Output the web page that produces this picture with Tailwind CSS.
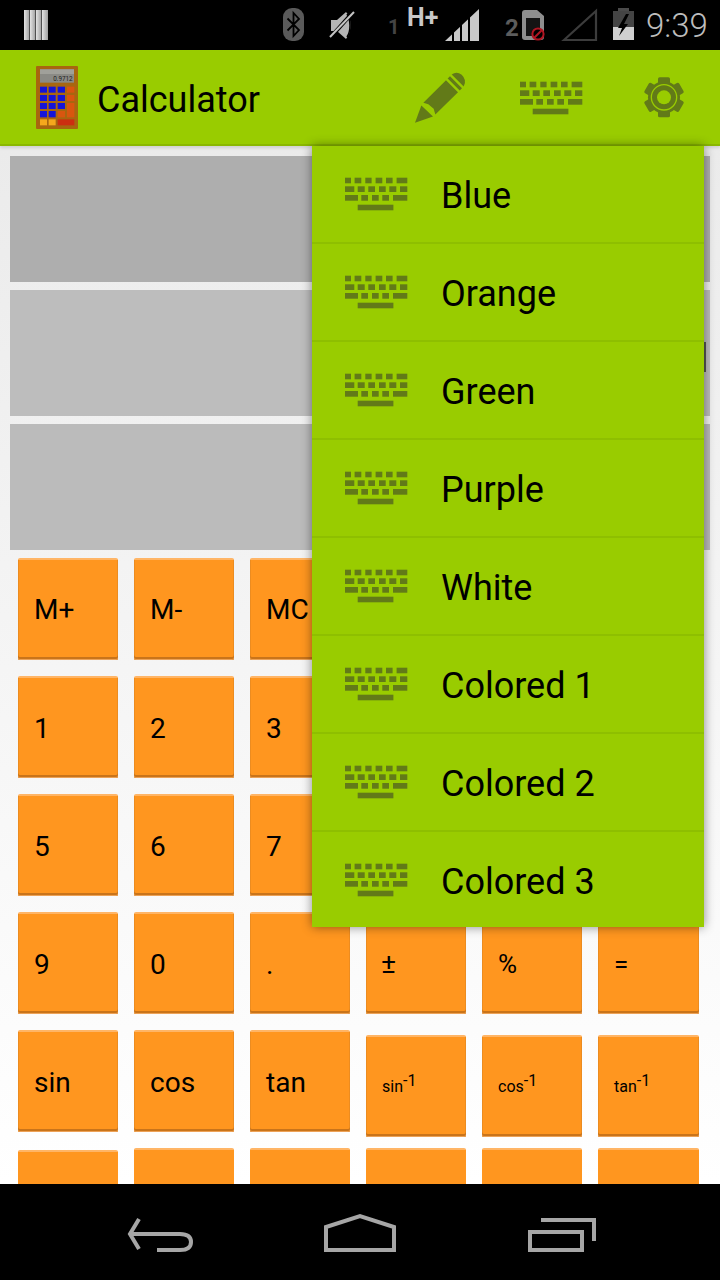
<!DOCTYPE html>
<html>
<head>
<meta charset="utf-8">
<script src="https://cdn.jsdelivr.net/npm/@tailwindcss/browser@4"></script>
<title>Calculator</title>
</head>
<body class="bg-black font-['Roboto',sans-serif]">
<svg class="hidden">
  <defs>
    <symbol id="kb" viewBox="0 0 63 34">
      <g fill="currentColor">
        <rect x="0" y="0.7" width="6" height="5.6"/><rect x="9.6" y="0.7" width="6.7" height="5.6"/><rect x="20.3" y="0.7" width="6.3" height="5.6"/><rect x="30.6" y="0.7" width="6.7" height="5.6"/><rect x="41" y="0.7" width="6.6" height="5.6"/><rect x="51.6" y="0.7" width="10.7" height="5.6"/>
        <rect x="0" y="9.3" width="9.3" height="5.7"/><rect x="12.7" y="9.3" width="7" height="5.7"/><rect x="23.3" y="9.3" width="6.7" height="5.7"/><rect x="34" y="9.3" width="6.7" height="5.7"/><rect x="44.3" y="9.3" width="7" height="5.7"/><rect x="55" y="9.3" width="7.3" height="5.7"/>
        <rect x="0" y="18" width="13" height="5.7"/><rect x="16.3" y="18" width="6.7" height="5.7"/><rect x="27" y="18" width="6.7" height="5.7"/><rect x="37.3" y="18" width="6.7" height="5.7"/><rect x="48" y="18" width="14.3" height="5.7"/>
        <rect x="12.7" y="27.7" width="35.7" height="5.6"/>
      </g>
    </symbol>
  </defs>
</svg>

<div class="relative w-[720px] h-[1280px] overflow-hidden flex flex-col bg-black">

  <!-- status bar -->
  <div class="relative h-[50px] shrink-0 bg-black">
    <svg class="absolute left-0 top-0" width="720" height="50" viewBox="0 0 720 50">
      <defs>
        <linearGradient id="bar" x1="0" x2="1" y1="0" y2="0"><stop offset="0" stop-color="#e4e4e4"/><stop offset="1" stop-color="#a0a0a0"/></linearGradient>
      </defs>
      <g fill="url(#bar)">
        <rect x="24" y="10" width="5.5" height="30"/><rect x="30" y="10" width="5.5" height="30"/><rect x="36" y="10" width="5.5" height="30"/><rect x="42" y="10" width="6" height="30"/>
      </g>
      <rect x="283" y="8" width="21" height="33" rx="9" fill="#5a5a5a"/>
      <path d="M287.5 18.5 L299 30 L293.5 36 V13 L299 19 L287.5 30.5" fill="none" stroke="#000" stroke-width="1.8"/>
      <path d="M331 20 H337 L346 12 C352 18 352 32 346 39 L337 31 H331 Z" fill="#b5b5b5"/>
      <path d="M347 14 C351 20 351 31 347 37" fill="none" stroke="#000" stroke-width="1.5"/>
      <path d="M330 38 L354 11" stroke="#000" stroke-width="4"/>
      <path d="M330 37 L354 12" stroke="#c4c4c4" stroke-width="2"/>
      <path d="M445 41 L479 9 V41 Z" fill="#c9c9c9"/>
      <g fill="#000"><rect x="452" y="0" width="2" height="42"/><rect x="460" y="0" width="2" height="42"/><rect x="468" y="0" width="2" height="42"/></g>
      <path d="M522 13 Q522 10 525 10 H537 L544 16 V37 Q544 40 541 40 H525 Q522 40 522 37 Z" fill="#8e8e8e"/>
      <path d="M526 18 H540 V36 H526 Z" fill="#141414"/>
      <circle cx="538" cy="34" r="5.6" fill="#000" stroke="#b01522" stroke-width="2"/>
      <path d="M534 38 L542 30" stroke="#b01522" stroke-width="2"/>
      <path d="M564 40 L596 11 V40 Z" fill="none" stroke="#3c3c3c" stroke-width="2.2"/>
      <rect x="618" y="8" width="11" height="3" fill="#4a4a4a"/>
      <rect x="613" y="11" width="21" height="16" fill="#444"/>
      <rect x="613" y="27" width="21" height="13" fill="#cfcfcf"/>
      <path d="M626 14 L618 28 H622 L619 36 L628 24 H624 L629 14 Z" fill="#000"/>
    </svg>
    <span class="absolute left-[388px] top-[13px] text-[20px] leading-[28px] font-bold text-[#444]">1</span>
    <span class="absolute left-[407px] top-[5px] text-[25px] leading-[26px] font-bold text-[#c8c8c8]">H+</span>
    <span class="absolute left-[505px] top-[14px] text-[24px] leading-[28px] font-bold text-[#5c5c5c]">2</span>
    <span class="absolute left-[646px] top-[7px] text-[33px] leading-[38px] font-light text-[#bdbdbd]">9:39</span>
  </div>

  <!-- action bar -->
  <div class="relative z-10 h-[96px] shrink-0 flex items-center bg-[#99cc00] border-b-2 border-[#8ab800] shadow-[0_2px_3px_rgba(0,0,0,0.12)]">
    <svg class="ml-[36px] shrink-0" width="42" height="63" viewBox="108 198 126 189">
      <rect x="108" y="198" width="126" height="189" rx="3" fill="#a8660f"/>
      <rect x="120" y="208" width="102" height="40" fill="#8a8a85"/>
      <rect x="120" y="208" width="102" height="14" fill="#a0a09a"/>
      <text x="218" y="243" text-anchor="end" font-family="Roboto" font-size="19" fill="#222">0.9712</text>
      <g fill="#1414d8">
        <rect x="120" y="260" width="21" height="18"/><rect x="146" y="260" width="21" height="18"/><rect x="173" y="260" width="22" height="18"/>
        <rect x="120" y="285" width="21" height="18"/><rect x="146" y="285" width="21" height="18"/><rect x="173" y="285" width="22" height="18"/>
        <rect x="120" y="309" width="21" height="18"/><rect x="146" y="309" width="21" height="18"/><rect x="173" y="309" width="22" height="18"/>
        <rect x="120" y="333" width="21" height="19"/><rect x="146" y="333" width="21" height="19"/>
      </g>
      <g fill="#d8560f">
        <rect x="201" y="260" width="22" height="18"/><rect x="201" y="285" width="22" height="18"/><rect x="201" y="309" width="22" height="43"/><rect x="173" y="333" width="22" height="19"/>
      </g>
      <g fill="#f5a81c"><rect x="120" y="358" width="21" height="18"/><rect x="146" y="358" width="21" height="18"/></g>
      <rect x="173" y="358" width="50" height="18" fill="#cc2f10"/>
    </svg>
    <span class="ml-[19px] mt-[6px] text-[36px] leading-[44px] text-black">Calculator</span>
    <svg class="absolute left-[410px] top-[20px]" width="60" height="57" viewBox="150 210 180 170">
      <g fill="#627a18">
        <path d="M165 368 L184 316 L219 349 Z"/>
        <path d="M190 308 L258 240 L294 276 L226 343 L221 326 L205 312 Z"/>
        <path d="M263 235 L270 228 L306 264 L299 271 Z"/>
        <path d="M275 223 Q290 212 305 224 Q322 240 311 259 Z"/>
      </g>
    </svg>
    <svg class="absolute left-[520px] top-[31px] text-[#627a18]" width="63" height="34"><use href="#kb"/></svg>
    <svg class="absolute left-[640px] top-[23px]" width="48" height="48" viewBox="840 220 144 144">
      <g fill="#627a18">
        <circle cx="912" cy="293" r="48"/>
        <rect x="894" y="233" width="36" height="120" rx="5"/>
        <rect x="894" y="233" width="36" height="120" rx="5" transform="rotate(60 912 293)"/>
        <rect x="894" y="233" width="36" height="120" rx="5" transform="rotate(120 912 293)"/>
      </g>
      <circle cx="912" cy="293" r="38" fill="none" stroke="#99cc00" stroke-width="4"/>
      <circle cx="912" cy="293" r="21" fill="#99cc00"/>
    </svg>
  </div>

  <!-- content -->
  <div class="h-[1038px] shrink-0 overflow-hidden flex flex-col bg-gradient-to-b from-[#ebebeb] to-white px-[10px] pt-[10px]">
    <div class="flex flex-col gap-2">
      <div class="h-[126px] w-[700px] bg-[#aeaeae]"></div>
      <div class="h-[126px] w-[700px] bg-[#bdbdbd]"></div>
      <div class="h-[126px] w-[700px] bg-[#bbbbbb]"></div>
    </div>
    <div class="mt-2 pl-2 flex flex-col gap-4 text-[28px] text-black">
      <div class="flex gap-4 items-start">
        <div class="flex items-center w-[100px] h-[102px] pl-[16px] shrink-0 rounded-[2px] bg-[#ff961f] border-t-2 border-t-[#ffb566] shadow-[inset_0_-1px_0_#eda257,inset_0_-3px_0_#c9741a,inset_1px_0_0_#ec8c20,inset_-1px_0_0_#ec8c20]">M+</div>
        <div class="flex items-center w-[100px] h-[102px] pl-[16px] shrink-0 rounded-[2px] bg-[#ff961f] border-t-2 border-t-[#ffb566] shadow-[inset_0_-1px_0_#eda257,inset_0_-3px_0_#c9741a,inset_1px_0_0_#ec8c20,inset_-1px_0_0_#ec8c20]">M-</div>
        <div class="flex items-center w-[100px] h-[102px] pl-[16px] shrink-0 rounded-[2px] bg-[#ff961f] border-t-2 border-t-[#ffb566] shadow-[inset_0_-1px_0_#eda257,inset_0_-3px_0_#c9741a,inset_1px_0_0_#ec8c20,inset_-1px_0_0_#ec8c20]">MC</div>
      </div>
      <div class="flex gap-4 items-start">
        <div class="flex items-center w-[100px] h-[102px] pl-[16px] pt-[2px] shrink-0 rounded-[2px] bg-[#ff961f] border-t-2 border-t-[#ffb566] shadow-[inset_0_-1px_0_#eda257,inset_0_-3px_0_#c9741a,inset_1px_0_0_#ec8c20,inset_-1px_0_0_#ec8c20]">1</div>
        <div class="flex items-center w-[100px] h-[102px] pl-[16px] pt-[2px] shrink-0 rounded-[2px] bg-[#ff961f] border-t-2 border-t-[#ffb566] shadow-[inset_0_-1px_0_#eda257,inset_0_-3px_0_#c9741a,inset_1px_0_0_#ec8c20,inset_-1px_0_0_#ec8c20]">2</div>
        <div class="flex items-center w-[100px] h-[102px] pl-[16px] pt-[2px] shrink-0 rounded-[2px] bg-[#ff961f] border-t-2 border-t-[#ffb566] shadow-[inset_0_-1px_0_#eda257,inset_0_-3px_0_#c9741a,inset_1px_0_0_#ec8c20,inset_-1px_0_0_#ec8c20]">3</div>
      </div>
      <div class="flex gap-4 items-start">
        <div class="flex items-center w-[100px] h-[102px] pl-[16px] pt-[2px] shrink-0 rounded-[2px] bg-[#ff961f] border-t-2 border-t-[#ffb566] shadow-[inset_0_-1px_0_#eda257,inset_0_-3px_0_#c9741a,inset_1px_0_0_#ec8c20,inset_-1px_0_0_#ec8c20]">5</div>
        <div class="flex items-center w-[100px] h-[102px] pl-[16px] pt-[2px] shrink-0 rounded-[2px] bg-[#ff961f] border-t-2 border-t-[#ffb566] shadow-[inset_0_-1px_0_#eda257,inset_0_-3px_0_#c9741a,inset_1px_0_0_#ec8c20,inset_-1px_0_0_#ec8c20]">6</div>
        <div class="flex items-center w-[100px] h-[102px] pl-[16px] pt-[2px] shrink-0 rounded-[2px] bg-[#ff961f] border-t-2 border-t-[#ffb566] shadow-[inset_0_-1px_0_#eda257,inset_0_-3px_0_#c9741a,inset_1px_0_0_#ec8c20,inset_-1px_0_0_#ec8c20]">7</div>
      </div>
      <div class="flex gap-4 items-start">
        <div class="flex items-center w-[100px] h-[102px] pl-[16px] pt-[2px] shrink-0 rounded-[2px] bg-[#ff961f] border-t-2 border-t-[#ffb566] shadow-[inset_0_-1px_0_#eda257,inset_0_-3px_0_#c9741a,inset_1px_0_0_#ec8c20,inset_-1px_0_0_#ec8c20]">9</div>
        <div class="flex items-center w-[100px] h-[102px] pl-[16px] pt-[2px] shrink-0 rounded-[2px] bg-[#ff961f] border-t-2 border-t-[#ffb566] shadow-[inset_0_-1px_0_#eda257,inset_0_-3px_0_#c9741a,inset_1px_0_0_#ec8c20,inset_-1px_0_0_#ec8c20]">0</div>
        <div class="flex items-center w-[100px] h-[102px] pl-[16px] pt-[2px] shrink-0 rounded-[2px] bg-[#ff961f] border-t-2 border-t-[#ffb566] shadow-[inset_0_-1px_0_#eda257,inset_0_-3px_0_#c9741a,inset_1px_0_0_#ec8c20,inset_-1px_0_0_#ec8c20]">.</div>
        <div class="flex items-center w-[100px] h-[102px] pl-[15px] shrink-0 rounded-[2px] bg-[#ff961f] border-t-2 border-t-[#ffb566] shadow-[inset_0_-1px_0_#eda257,inset_0_-3px_0_#c9741a,inset_1px_0_0_#ec8c20,inset_-1px_0_0_#ec8c20]">±</div>
        <div class="flex items-center w-[100px] h-[102px] pl-[16px] shrink-0 rounded-[2px] bg-[#ff961f] border-t-2 border-t-[#ffb566] shadow-[inset_0_-1px_0_#eda257,inset_0_-3px_0_#c9741a,inset_1px_0_0_#ec8c20,inset_-1px_0_0_#ec8c20] text-[26px]">%</div>
        <div class="flex items-center w-[101px] h-[102px] pl-[16px] shrink-0 rounded-[2px] bg-[#ff961f] border-t-2 border-t-[#ffb566] shadow-[inset_0_-1px_0_#eda257,inset_0_-3px_0_#c9741a,inset_1px_0_0_#ec8c20,inset_-1px_0_0_#ec8c20] text-[26px]">=</div>
      </div>
      <div class="flex gap-4 items-start">
        <div class="flex items-center w-[100px] h-[102px] pl-[16px] pt-[2px] shrink-0 rounded-[2px] bg-[#ff961f] border-t-2 border-t-[#ffb566] shadow-[inset_0_-1px_0_#eda257,inset_0_-3px_0_#c9741a,inset_1px_0_0_#ec8c20,inset_-1px_0_0_#ec8c20]">sin</div>
        <div class="flex items-center w-[100px] h-[102px] pl-[16px] pt-[2px] shrink-0 rounded-[2px] bg-[#ff961f] border-t-2 border-t-[#ffb566] shadow-[inset_0_-1px_0_#eda257,inset_0_-3px_0_#c9741a,inset_1px_0_0_#ec8c20,inset_-1px_0_0_#ec8c20]">cos</div>
        <div class="flex items-center w-[100px] h-[102px] pl-[16px] pt-[2px] shrink-0 rounded-[2px] bg-[#ff961f] border-t-2 border-t-[#ffb566] shadow-[inset_0_-1px_0_#eda257,inset_0_-3px_0_#c9741a,inset_1px_0_0_#ec8c20,inset_-1px_0_0_#ec8c20]">tan</div>
        <div class="flex items-center w-[100px] h-[102px] mt-[5px] -mb-[5px] pl-[16px] shrink-0 rounded-[2px] bg-[#ff961f] border-t-2 border-t-[#ffb566] shadow-[inset_0_-1px_0_#eda257,inset_0_-3px_0_#c9741a,inset_1px_0_0_#ec8c20,inset_-1px_0_0_#ec8c20] text-[16px]"><span>sin<span class="relative -top-[6px] text-[16px]">-1</span></span></div>
        <div class="flex items-center w-[100px] h-[102px] mt-[5px] -mb-[5px] pl-[16px] shrink-0 rounded-[2px] bg-[#ff961f] border-t-2 border-t-[#ffb566] shadow-[inset_0_-1px_0_#eda257,inset_0_-3px_0_#c9741a,inset_1px_0_0_#ec8c20,inset_-1px_0_0_#ec8c20] text-[16px]"><span>cos<span class="relative -top-[6px] text-[16px]">-1</span></span></div>
        <div class="flex items-center w-[101px] h-[102px] mt-[5px] -mb-[5px] pl-[16px] shrink-0 rounded-[2px] bg-[#ff961f] border-t-2 border-t-[#ffb566] shadow-[inset_0_-1px_0_#eda257,inset_0_-3px_0_#c9741a,inset_1px_0_0_#ec8c20,inset_-1px_0_0_#ec8c20] text-[16px]"><span>tan<span class="relative -top-[6px] text-[16px]">-1</span></span></div>
      </div>
      <div class="flex gap-4 items-start">
        <div class="w-[100px] h-[102px] mt-[2px] shrink-0 rounded-[2px] bg-[#ff961f] border-t-2 border-t-[#ffb566]"></div>
        <div class="w-[100px] h-[102px] shrink-0 rounded-[2px] bg-[#ff961f] border-t-2 border-t-[#ffb566]"></div>
        <div class="w-[100px] h-[102px] shrink-0 rounded-[2px] bg-[#ff961f] border-t-2 border-t-[#ffb566]"></div>
        <div class="w-[100px] h-[102px] shrink-0 rounded-[2px] bg-[#ff961f] border-t-2 border-t-[#ffb566]"></div>
        <div class="w-[100px] h-[102px] shrink-0 rounded-[2px] bg-[#ff961f] border-t-2 border-t-[#ffb566]"></div>
        <div class="w-[101px] h-[102px] shrink-0 rounded-[2px] bg-[#ff961f] border-t-2 border-t-[#ffb566]"></div>
      </div>
    </div>
  </div>

  <!-- nav bar -->
  <div class="relative h-[96px] shrink-0 bg-black">
    <svg class="absolute left-0 top-0" width="720" height="96" viewBox="0 1184 720 96" fill="none" stroke="#a6a6a6" stroke-width="4">
      <path d="M139 1219 L130 1234 L139 1249"/>
      <path d="M130 1234 H180 Q191 1234 191 1242 Q191 1250 180 1250 H157"/>
      <path d="M326 1250 V1227 L360 1216 L394 1227 V1250 Z"/>
      <path d="M530 1232 H582 V1250 H530 Z"/>
      <path d="M541 1220 H594 V1241"/>
    </svg>
  </div>

  <!-- dark mark at the menu's edge -->
  <div class="absolute left-[704px] top-[342px] w-[2px] h-[30px] bg-[#555]"></div>

  <!-- overflow menu -->
  <div class="absolute z-20 left-[312px] top-[146px] w-[392px] h-[781px] flex flex-col bg-[#99cc00] shadow-[0_0_10px_rgba(0,0,0,0.45)] text-[36px] text-black">
    <div class="h-[98px] shrink-0 flex items-center pl-[33px] border-b-2 border-[#8ebf00]"><svg class="text-[#627a18] shrink-0" width="63" height="34"><use href="#kb"/></svg><span class="ml-[33px] mt-[3px]">Blue</span></div>
    <div class="h-[98px] shrink-0 flex items-center pl-[33px] border-b-2 border-[#8ebf00]"><svg class="text-[#627a18] shrink-0" width="63" height="34"><use href="#kb"/></svg><span class="ml-[33px] mt-[3px]">Orange</span></div>
    <div class="h-[98px] shrink-0 flex items-center pl-[33px] border-b-2 border-[#8ebf00]"><svg class="text-[#627a18] shrink-0" width="63" height="34"><use href="#kb"/></svg><span class="ml-[33px] mt-[3px]">Green</span></div>
    <div class="h-[98px] shrink-0 flex items-center pl-[33px] border-b-2 border-[#8ebf00]"><svg class="text-[#627a18] shrink-0" width="63" height="34"><use href="#kb"/></svg><span class="ml-[33px] mt-[3px]">Purple</span></div>
    <div class="h-[98px] shrink-0 flex items-center pl-[33px] border-b-2 border-[#8ebf00]"><svg class="text-[#627a18] shrink-0" width="63" height="34"><use href="#kb"/></svg><span class="ml-[33px] mt-[3px]">White</span></div>
    <div class="h-[98px] shrink-0 flex items-center pl-[33px] border-b-2 border-[#8ebf00]"><svg class="text-[#627a18] shrink-0" width="63" height="34"><use href="#kb"/></svg><span class="ml-[33px] mt-[3px]">Colored 1</span></div>
    <div class="h-[98px] shrink-0 flex items-center pl-[33px] border-b-2 border-[#8ebf00]"><svg class="text-[#627a18] shrink-0" width="63" height="34"><use href="#kb"/></svg><span class="ml-[33px] mt-[3px]">Colored 2</span></div>
    <div class="h-[95px] shrink-0 flex items-center pl-[33px]"><svg class="text-[#627a18] shrink-0 mb-[-1px]" width="63" height="34"><use href="#kb"/></svg><span class="ml-[33px] mt-[4px]">Colored 3</span></div>
  </div>
</div>
</body>
</html>
